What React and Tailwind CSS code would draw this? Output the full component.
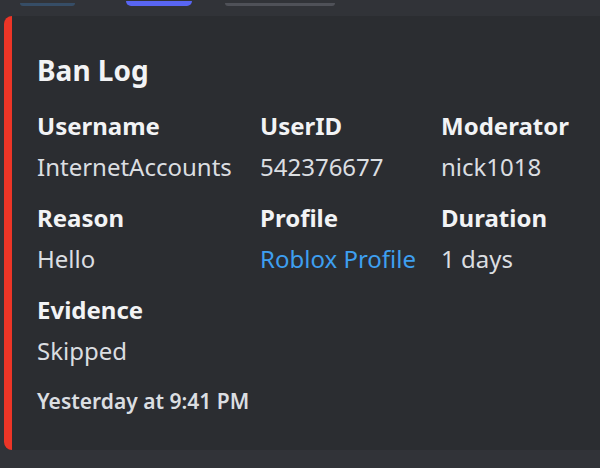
import React from "react";

const fields = [
  { name: "Username", value: "InternetAccounts" },
  { name: "UserID", value: "542376677" },
  { name: "Moderator", value: "nick1018" },
  { name: "Reason", value: "Hello" },
  { name: "Profile", value: "Roblox Profile", link: true },
  { name: "Duration", value: "1 days" },
  { name: "Evidence", value: "Skipped" },
];

export default function App() {
  return (
    <div
      className="w-[600px] h-[468px] overflow-hidden bg-[#313338]"
      style={{ fontFamily: '"Noto Sans", "Open Sans", sans-serif' }}
    >
      {/* Cropped message header */}
      <div className="h-[16px] overflow-hidden">
        <div className="flex items-end h-[6px] pl-[20px]">
          <span className="w-[55px] h-[3px] rounded-b bg-[#3a5f85] opacity-60" />
          <span className="ml-[51px] w-[66px] h-[5px] rounded-b-[6px] bg-[#5865f2]" />
          <span className="ml-[33px] w-[110px] h-[3px] rounded-b bg-[#6d6f78] opacity-50" />
        </div>
      </div>

      {/* Embed */}
      <div className="ml-[4px] w-[640px] flex rounded-l-[8px] overflow-hidden bg-[#2b2d31]">
        <div className="w-[8px] bg-[#ec3527] shrink-0" />
        <div className="pl-[25px] pt-[36px] pb-[35px]">
          <h1 className="text-[28px] leading-[36px] font-bold text-[#f2f3f5]">Ban Log</h1>

          <div className="mt-[19px] grid grid-cols-[223px_181px_180px] gap-y-[11px]">
            {fields.map((f) => (
              <div key={f.name}>
                <div className="text-[24px] leading-[38px] font-bold text-[#f2f3f5]">{f.name}</div>
                <div
                  className={`text-[24px] leading-[43px] ${
                    f.link ? "text-[#3e9ff0]" : "text-[#dbdee1]"
                  }`}
                >
                  {f.value}
                </div>
              </div>
            ))}
          </div>

          <div className="mt-[15px] text-[21px] leading-[28px] font-semibold text-[#dbdee1]">
            Yesterday at 9:41 PM
          </div>
        </div>
      </div>
    </div>
  );
}
